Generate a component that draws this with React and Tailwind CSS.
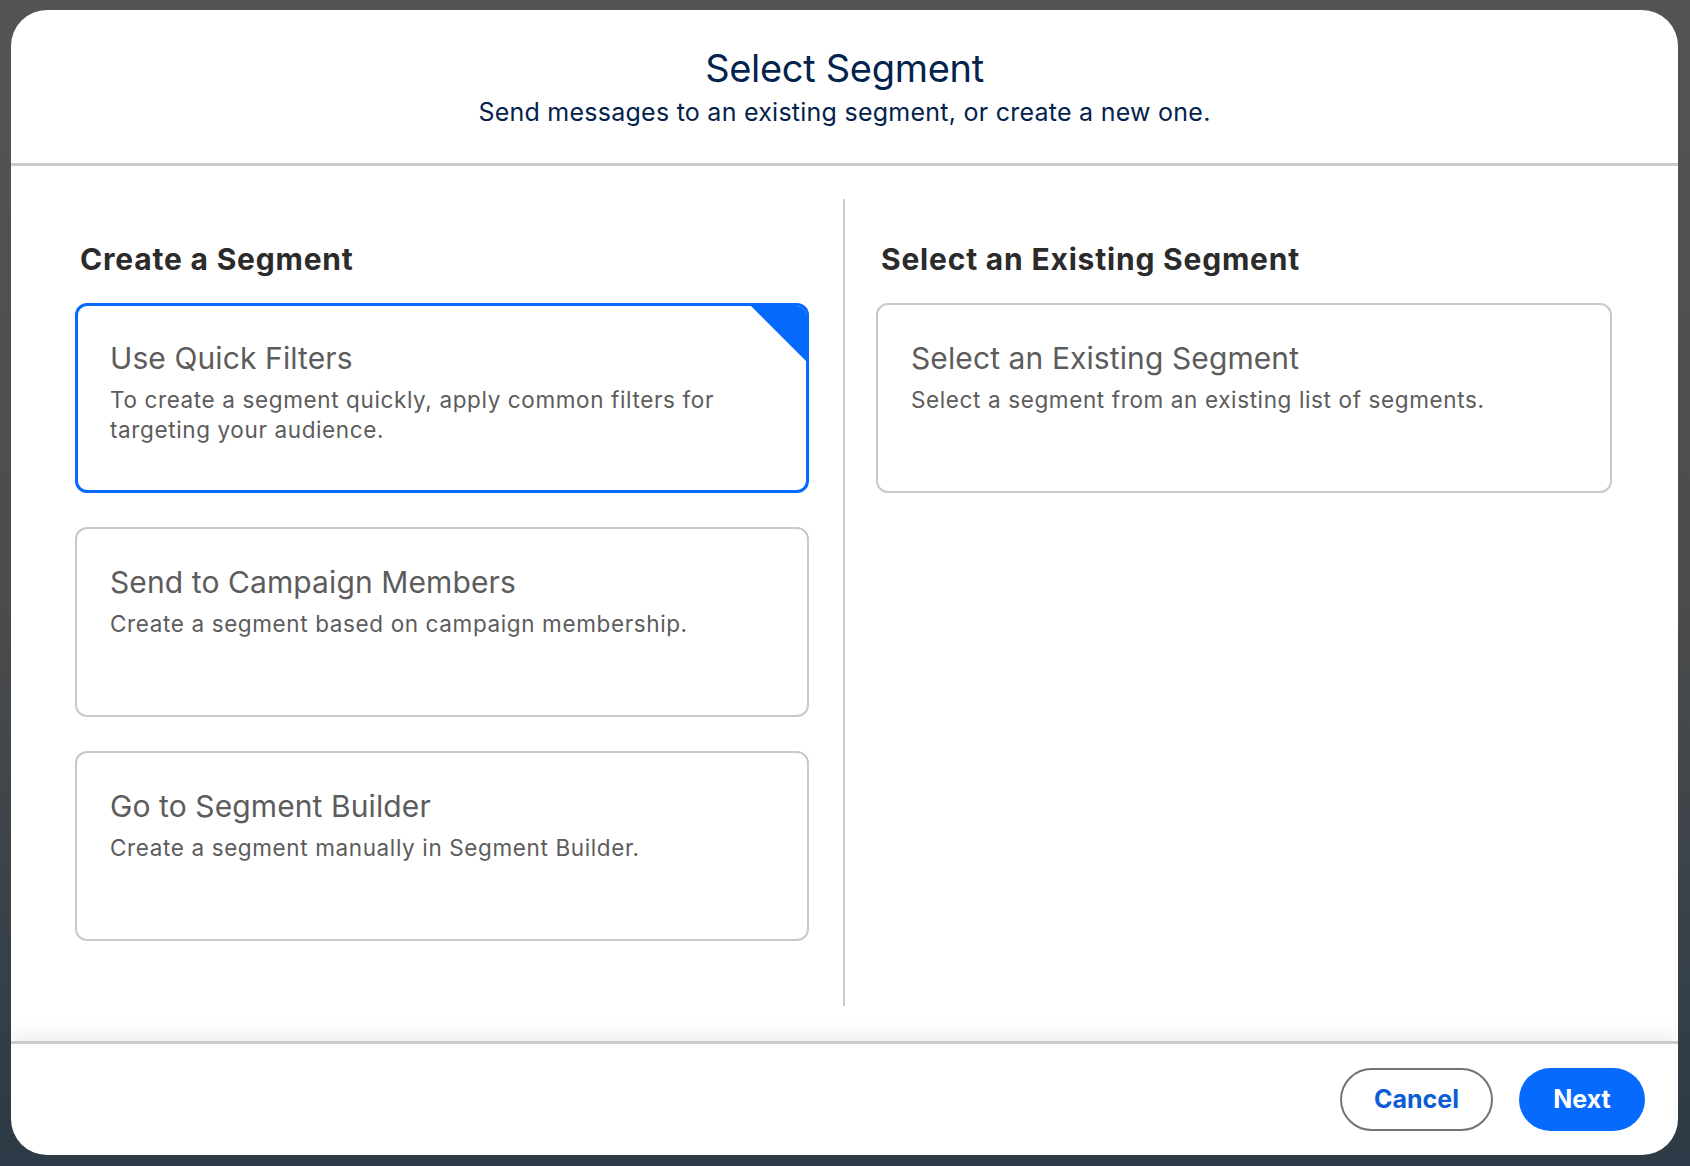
// Select Segment modal

import React, { useState } from 'react';

const createOptions = [
    {
        id: 'quick',
        title: 'Use Quick Filters',
        description: 'To create a segment quickly, apply common filters for targeting your audience.',
    },
    {
        id: 'campaign',
        title: 'Send to Campaign Members',
        description: 'Create a segment based on campaign membership.',
    },
    {
        id: 'builder',
        title: 'Go to Segment Builder',
        description: 'Create a segment manually in Segment Builder.',
    },
];

const existingOptions = [
    {
        id: 'existing',
        title: 'Select an Existing Segment',
        description: 'Select a segment from an existing list of segments.',
    },
];

const OptionCard = ({ option, selected, onSelect }) => {
    return (
        <div
            role="button"
            onClick={() => onSelect(option.id)}
            className={`relative w-full h-[190px] rounded-[12px] overflow-hidden bg-white cursor-pointer ${
                selected
                    ? 'border-[3px] border-[#066afe] pl-[32px] pr-[30px] pt-[34px]'
                    : 'border-2 border-[#c9c9c9] pl-[33px] pr-[31px] pt-[35px]'
            }`}
        >
            {selected && (
                <span className="absolute top-0 right-0 w-[55px] h-[55px] bg-[#066afe] [clip-path:polygon(0_0,100%_0,100%_100%)]" />
            )}
            <div className="text-[30px] leading-[36px] text-[#5c5c5c] tracking-[0.1px]">{option.title}</div>
            <div className="mt-[9px] text-[22.5px] leading-[30px] text-[#5c5c5c] tracking-[0.62px]">
                {option.description}
            </div>
        </div>
    );
};

const SectionHeading = ({ children }) => (
    <h2 className="pl-[5px] text-[30px] leading-[36px] font-bold text-[#2b2b2b] tracking-[0.8px] mb-[26px]">
        {children}
    </h2>
);

const App = () => {
    const [selected, setSelected] = useState('quick');

    return (
        <div
            className="w-full h-[1166px] pt-[10px] pl-[11px] pr-[12px] pb-[11px] bg-gradient-to-b from-[#545454] via-[#4c4c4c] to-[#2b3a46]"
            style={{ fontFamily: 'Inter, "Noto Sans", sans-serif' }}
        >
            <div className="h-full bg-white rounded-[36px] flex flex-col overflow-hidden">
                {/* Header */}
                <div className="h-[156px] shrink-0 flex flex-col items-center pt-[35px] border-b-[3px] border-[#cbcbcb]">
                    <h1 className="text-[38px] leading-[46px] text-[#03234d] tracking-[-0.3px]">Select Segment</h1>
                    <p className="mt-[5px] text-[25px] leading-[32px] text-[#03234d] tracking-[0.25px]">
                        Send messages to an existing segment, or create a new one.
                    </p>
                </div>

                {/* Body */}
                <div className="flex-1 flex pt-[33px] pb-[35px] pl-[64px] pr-[66px]">
                    <div className="w-[734px] shrink-0 pt-[42px]">
                        <SectionHeading>Create a Segment</SectionHeading>
                        <div className="flex flex-col gap-[34px]">
                            {createOptions.map(option => (
                                <OptionCard
                                    key={option.id}
                                    option={option}
                                    selected={selected === option.id}
                                    onSelect={setSelected}
                                />
                            ))}
                        </div>
                    </div>

                    <div className="ml-[34px] mr-[31px] w-[2px] bg-[#cbcbcb]" />

                    <div className="flex-1 pt-[42px]">
                        <SectionHeading>Select an Existing Segment</SectionHeading>
                        {existingOptions.map(option => (
                            <OptionCard
                                key={option.id}
                                option={option}
                                selected={selected === option.id}
                                onSelect={setSelected}
                            />
                        ))}
                    </div>
                </div>

                {/* Footer */}
                <div className="h-[114px] shrink-0 border-t-[3px] border-[#cbcbcb] shadow-[0_-10px_14px_rgba(0,0,0,0.05)] flex items-center justify-end gap-[26px] pr-[33px]">
                    <button
                        type="button"
                        className="w-[153px] h-[63px] rounded-full border-2 border-[#747474] bg-white text-[25px] font-bold text-[#0b5cd5]"
                    >
                        Cancel
                    </button>
                    <button
                        type="button"
                        className="w-[126px] h-[63px] rounded-full bg-[#066afe] text-[25px] font-bold text-white"
                    >
                        Next
                    </button>
                </div>
            </div>
        </div>
    );
};

export default App;
